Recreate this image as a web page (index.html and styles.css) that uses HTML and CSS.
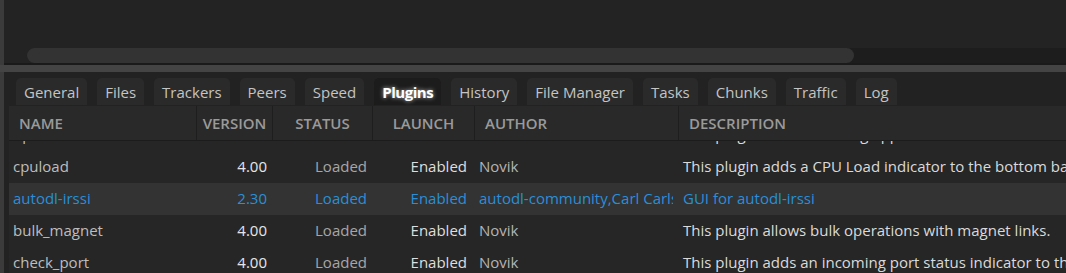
FILE: index.html
```html
<!DOCTYPE html>
<html lang="en">
<head>
    <meta charset="UTF-8">
    <title>Plugins</title>
    <link rel="stylesheet" href="styles.css">
</head>
<body>
    <div class="window">
        <!-- Torrent list (scrolled) -->
        <div class="top-pane">
            <div class="hscroll">
                <div class="thumb"></div>
            </div>
        </div>

        <div class="splitter"></div>

        <!-- Details pane -->
        <div class="bottom-pane">
            <ul class="tabs">
                <li>General</li>
                <li>Files</li>
                <li>Trackers</li>
                <li>Peers</li>
                <li>Speed</li>
                <li class="active">Plugins</li>
                <li>History</li>
                <li>File Manager</li>
                <li>Tasks</li>
                <li>Chunks</li>
                <li>Traffic</li>
                <li>Log</li>
            </ul>

            <div class="grid">
                <div class="grid-head">
                    <div class="cell">Name</div>
                    <div class="cell center">Version</div>
                    <div class="cell center">Status</div>
                    <div class="cell center">Launch</div>
                    <div class="cell">Author</div>
                    <div class="cell">Description</div>
                </div>

                <div class="grid-body">
                    <div class="rows">
                        <div class="row">
                            <div class="cell name">uploadeta</div>
                            <div class="cell num">4.00</div>
                            <div class="cell status">Loaded</div>
                            <div class="cell launch">Enabled</div>
                            <div class="cell author">Novik</div>
                            <div class="cell desc">This plugin adds a tracking applet to the status bar.</div>
                        </div>
                        <div class="row">
                            <div class="cell name">cpuload</div>
                            <div class="cell num">4.00</div>
                            <div class="cell status">Loaded</div>
                            <div class="cell launch">Enabled</div>
                            <div class="cell author">Novik</div>
                            <div class="cell desc">This plugin adds a CPU Load indicator to the bottom bar of ruTorrent window.</div>
                        </div>
                        <div class="row selected">
                            <div class="cell name">autodl-irssi</div>
                            <div class="cell num">2.30</div>
                            <div class="cell status">Loaded</div>
                            <div class="cell launch">Enabled</div>
                            <div class="cell author">autodl-community,Carl Carlson</div>
                            <div class="cell desc">GUI for autodl-irssi</div>
                        </div>
                        <div class="row">
                            <div class="cell name">bulk_magnet</div>
                            <div class="cell num">4.00</div>
                            <div class="cell status">Loaded</div>
                            <div class="cell launch">Enabled</div>
                            <div class="cell author">Novik</div>
                            <div class="cell desc">This plugin allows bulk operations with magnet links.</div>
                        </div>
                        <div class="row">
                            <div class="cell name">check_port</div>
                            <div class="cell num">4.00</div>
                            <div class="cell status">Loaded</div>
                            <div class="cell launch">Enabled</div>
                            <div class="cell author">Novik</div>
                            <div class="cell desc">This plugin adds an incoming port status indicator to the bottom bar.</div>
                        </div>
                    </div>
                </div>
            </div>
        </div>
    </div>
</body>
</html>
```

FILE: styles.css
```css
html, body {
    margin: 0;
    height: 100%;
    overflow: hidden;
}

body {
    background: #232323;
    font-family: "Open Sans", "Noto Sans", sans-serif;
    font-size: 15px;
    color: #c8c8c8;
}

.window {
    height: 100%;
    border-left: 4px solid #3b3b3b;
    display: flex;
    flex-direction: column;
}

/* top pane with its horizontal scrollbar */
.top-pane {
    height: 48px;
    padding-bottom: 15px;
    position: relative;
    border-bottom: 2px solid #1a1a1a;
}

.hscroll {
    position: absolute;
    left: 23px;
    right: 0;
    bottom: 0;
    height: 15px;
    background: #1d1d1d;
    border-radius: 8px 0 0 8px;
}

.hscroll .thumb {
    width: 827px;
    height: 100%;
    background: #333;
    border-radius: 8px;
}

.splitter {
    height: 7px;
    background: #444;
    margin-left: -4px;
}

.bottom-pane {
    flex: 1;
    background: #222;
    padding: 6px 0 0 5px;
    overflow: hidden;
}

/* tabs */
.tabs {
    list-style: none;
    margin: 0;
    padding: 0 0 0 7px;
    display: flex;
    gap: 10px;
    height: 28px;
}

.tabs li {
    padding: 0 8px;
    height: 27px;
    line-height: 28px;
    font-size: 15px;
    color: #c4c4c4;
    background: #2a2a2a;
    border-radius: 5px 5px 0 0;
    white-space: nowrap;
}

.tabs li.active {
    background: #1c1c1c;
    color: #fff;
    font-weight: bold;
    letter-spacing: -0.45px;
    text-shadow: 0 0 4px rgba(255, 255, 255, 0.7);
}

/* plugin grid */
.grid-head,
.row {
    display: grid;
    grid-template-columns: 188px 76px 100px 102px 204px 1fr;
}

.grid-head {
    height: 34px;
    background: #292929;
    border-bottom: 1px solid #1c1c1c;
}

.grid-head .cell {
    padding: 0 10px;
    line-height: 35px;
    font-weight: 600;
    text-transform: uppercase;
    color: #9a9a9a;
    border-right: 1px solid #1e1e1e;
    white-space: nowrap;
    overflow: hidden;
}

.grid-head .cell:last-child {
    border-right: none;
}

.grid-head .center {
    text-align: center;
    padding: 0;
}

.grid-body {
    background: #262626;
    height: 140px;
    overflow: hidden;
}

.rows {
    margin-top: -22px;
}

.row {
    height: 32px;
}

.row .cell {
    line-height: 31px;
    padding: 0 0 0 4px;
    white-space: nowrap;
    overflow: hidden;
}

.row .name { color: #bdbdbd; }
.row .num { color: #e6e6e6; text-align: right; margin-right: 6px; }
.row .status { color: #a6a6a6; text-align: right; margin-right: 6px; }
.row .launch { color: #dedede; text-align: right; margin-right: 8px; }
.row .author { color: #b4b4b4; margin-right: 6px; }
.row .desc { color: #dadada; }

.row.selected {
    background: #333;
}

.row.selected .cell {
    color: #2a8fd6;
}
```
